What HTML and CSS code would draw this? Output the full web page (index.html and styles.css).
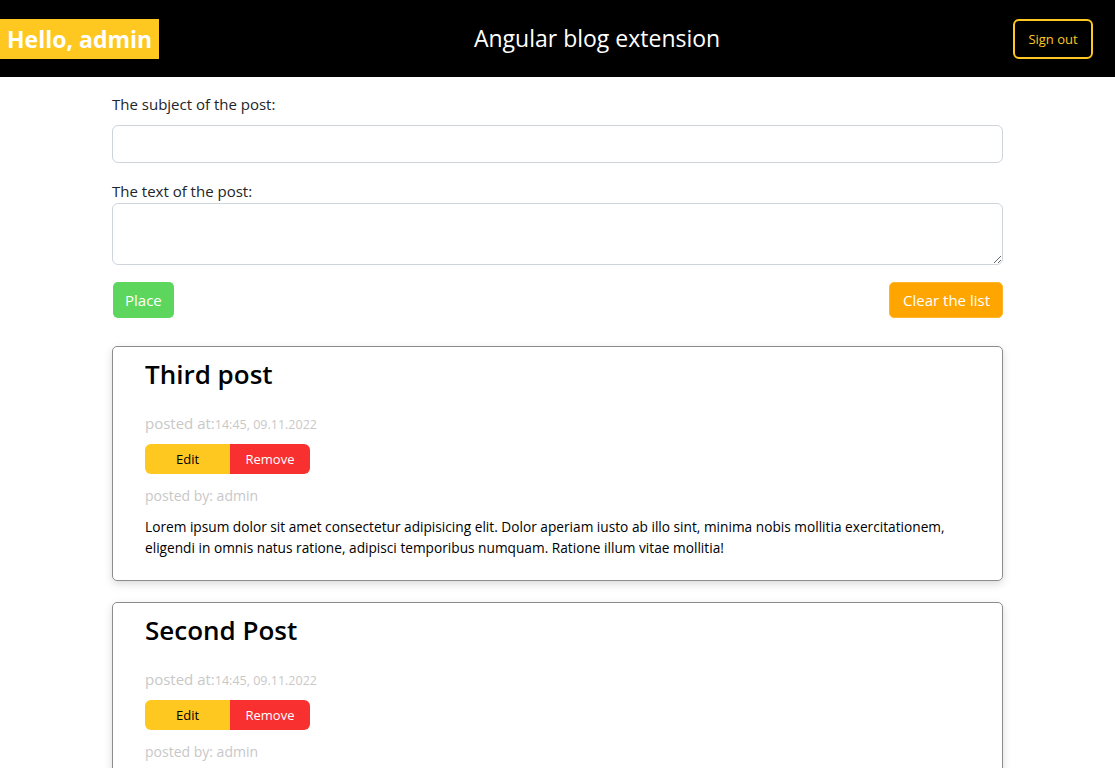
FILE: index.html
```html
<!DOCTYPE html>
<html lang="en">
<head>
    <meta charset="UTF-8">
    <meta name="viewport" content="width=device-width, initial-scale=1.0">
    <title>Angular blog extension</title>
    <link rel="stylesheet" href="styles.css">
</head>
<body>
    <header class="navbar">
        <div class="greeting">Hello, admin</div>
        <div class="brand">Angular blog extension</div>
        <button class="btn-signout">Sign out</button>
    </header>

    <main class="container">
        <form class="post-form">
            <label class="form-label" for="subject">The subject of the post:</label>
            <input class="form-control" id="subject" type="text">
            <label class="form-label form-label-tight" for="text">The text of the post:</label>
            <textarea class="form-control form-textarea" id="text"></textarea>
            <div class="form-actions">
                <button type="button" class="btn btn-place">Place</button>
                <button type="button" class="btn btn-clear">Clear the list</button>
            </div>
        </form>

        <div class="post-list">
            <div class="post-card">
                <h3 class="post-title">Third post</h3>
                <p class="post-date">posted at:<span>14:45, 09.11.2022</span></p>
                <div class="post-buttons">
                    <button class="btn-edit">Edit</button>
                    <button class="btn-remove">Remove</button>
                </div>
                <p class="post-author">posted by: admin</p>
                <p class="post-text">Lorem ipsum dolor sit amet consectetur adipisicing elit. Dolor aperiam iusto ab illo sint, minima nobis mollitia exercitationem, eligendi in omnis natus ratione, adipisci temporibus numquam. Ratione illum vitae mollitia!</p>
            </div>
            <div class="post-card">
                <h3 class="post-title">Second Post</h3>
                <p class="post-date">posted at:<span>14:45, 09.11.2022</span></p>
                <div class="post-buttons">
                    <button class="btn-edit">Edit</button>
                    <button class="btn-remove">Remove</button>
                </div>
                <p class="post-author">posted by: admin</p>
                <p class="post-text">Lorem ipsum dolor sit amet consectetur adipisicing elit. Dolor aperiam iusto ab illo sint, minima nobis mollitia exercitationem, eligendi in omnis natus ratione, adipisci temporibus numquam. Ratione illum vitae mollitia!</p>
            </div>
        </div>
    </main>
</body>
</html>
```

FILE: styles.css
```css
* {
    box-sizing: border-box;
}

body {
    margin: 0;
    font-family: 'Open Sans', 'Noto Sans', sans-serif;
    font-size: 15px;
    line-height: 1.5;
    color: #212529;
    background-color: #fff;
}

button {
    font-family: inherit;
    cursor: pointer;
}

.navbar {
    display: flex;
    justify-content: space-between;
    align-items: center;
    height: 77px;
    padding: 0 22px 0 0;
    background-color: #000;
}

.greeting {
    height: 40px;
    padding: 0 7px;
    line-height: 40px;
    background-color: #ffc820;
    color: #fff;
    font-size: 23px;
    font-weight: 700;
}

.brand {
    color: #fff;
    font-size: 23px;
    margin-left: 22px;
}

.btn-signout {
    height: 40px;
    width: 80px;
    padding: 0;
    background: transparent;
    border: 2px solid #ffc820;
    border-radius: 6px;
    color: #ffc820;
    font-size: 13px;
}

.container {
    width: 891px;
    margin: 0 auto;
    padding-top: 16px;
}

.post-form {
    display: flex;
    flex-direction: column;
}

.form-label {
    margin-bottom: 9px;
}

.form-label-tight {
    margin-bottom: 1px;
}

.form-control {
    height: 38px;
    margin-bottom: 17px;
    border: 1px solid #ced4da;
    border-radius: 6px;
    font-family: inherit;
    font-size: 15px;
}

.form-textarea {
    height: 62px;
    resize: vertical;
    margin-bottom: 17px;
}

.form-actions {
    display: flex;
    justify-content: space-between;
}

.btn {
    height: 36px;
    padding: 0 11px;
    border: 1px solid transparent;
    border-radius: 5px;
    color: #fff;
    font-size: 15px;
}

.btn-place {
    margin-left: 1px;
    background-color: #5cd65c;
}

.btn-clear {
    padding: 0 12px 0 13px;
    background-color: #ffa500;
    border-color: #ffb52e;
}

.post-list {
    padding-top: 28px;
}

.post-card {
    margin-bottom: 21px;
    padding: 8px 32px 22px;
    border: 1px solid #8c8c8c;
    border-radius: 5px;
    box-shadow: 0 3px 8px rgba(0, 0, 0, 0.15);
}

.post-title {
    margin: 0 0 18px;
    font-size: 26px;
    font-weight: 600;
    color: #000;
}

.post-date {
    margin: 0 0 9px;
    font-size: 15px;
    color: #c8c8c8;
}

.post-date span {
    font-size: 12.5px;
}

.post-buttons {
    display: flex;
}

.btn-edit,
.btn-remove {
    height: 30px;
    border: none;
    font-size: 13px;
}

.btn-edit {
    width: 85px;
    background-color: #ffc820;
    color: #000;
    border-radius: 6px 0 0 6px;
}

.btn-remove {
    width: 80px;
    background-color: #f83030;
    color: #fff;
    border-radius: 0 6px 6px 0;
}

.post-author {
    margin: 11px 0 10px;
    font-size: 14px;
    color: #c8c8c8;
}

.post-text {
    margin: 0;
    font-size: 13.7px;
    line-height: 21px;
    color: #000;
}
```
